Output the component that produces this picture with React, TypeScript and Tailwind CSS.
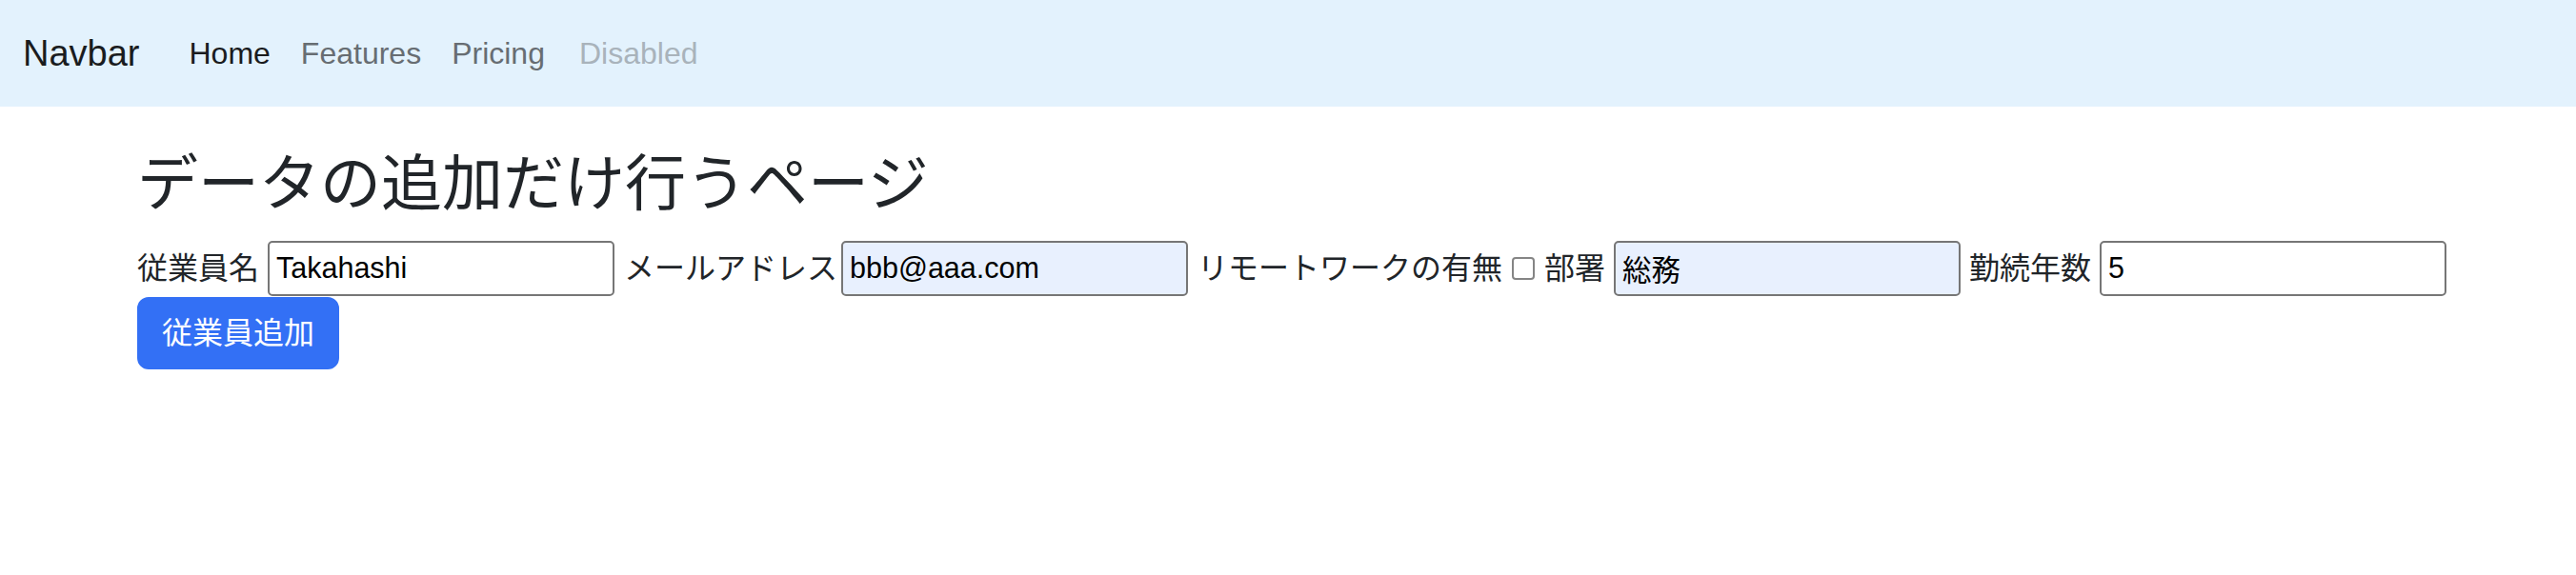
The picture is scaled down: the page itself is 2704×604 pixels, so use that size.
const FONT = "font-['Liberation_Sans','Noto_Sans_CJK_JP',sans-serif]";

const navLinks = [
  { label: "Home", cls: "text-[#1a1c1e]" },
  { label: "Features", cls: "text-[#676d72]" },
  { label: "Pricing", cls: "text-[#676d72]" },
  { label: "Disabled", cls: "ml-[4px] text-[#a9b3bb]" },
];

const TextField = ({ value, autofill }: { value: string; autofill?: boolean }) => (
  <input
    type="text"
    defaultValue={value}
    className={
      "h-[58px] w-[364px] rounded-[5px] border-2 border-[#767676] pl-[7px] text-[30.5px] text-black outline-none " +
      (autofill ? "bg-[#e8f0fe]" : "bg-white")
    }
  />
);

export default function App() {
  return (
    <div className={`min-h-[604px] w-full bg-white ${FONT} text-[#212529]`}>
      <nav className="flex h-[112px] items-center bg-[#e3f2fd] pl-[24px]">
        <a className="mr-[36px] text-[38px] text-[#1a1c1e]">Navbar</a>
        <ul className="flex">
          {navLinks.map((link) => (
            <li key={link.label}>
              <a className={`block px-[16px] text-[32px] ${link.cls}`}>{link.label}</a>
            </li>
          ))}
        </ul>
      </nav>

      <main className="pl-[144px] pt-[43px]">
        <h2 className="mb-[21px] text-[64px] font-normal leading-[76.8px] text-[#212529]">
          データの追加だけ行うページ
        </h2>
        <form className="flex h-[58px] items-center text-[32px] leading-[48px]">
          <label>従業員名</label>
          <div className="ml-[9px]">
            <TextField value="Takahashi" />
          </div>
          <label className="ml-[10px]">メールアドレス</label>
          <div className="ml-[4px]">
            <TextField value="bbb@aaa.com" autofill />
          </div>
          <label className="ml-[10px]">リモートワークの有無</label>
          <input
            type="checkbox"
            className="ml-[10px] h-[24px] w-[24px] appearance-none rounded-[4px] border-2 border-[#858585] bg-white"
          />
          <label className="ml-[10px]">部署</label>
          <div className="ml-[9px]">
            <TextField value="総務" autofill />
          </div>
          <label className="ml-[9px]">勤続年数</label>
          <div className="ml-[9px]">
            <TextField value="5" />
          </div>
        </form>
        <button
          type="button"
          className="mt-[1px] h-[76px] rounded-[12px] border-2 border-[#3370f5] bg-[#3370f5] px-[24px] text-[32px] leading-[48px] text-white"
        >
          従業員追加
        </button>
      </main>
    </div>
  );
}
